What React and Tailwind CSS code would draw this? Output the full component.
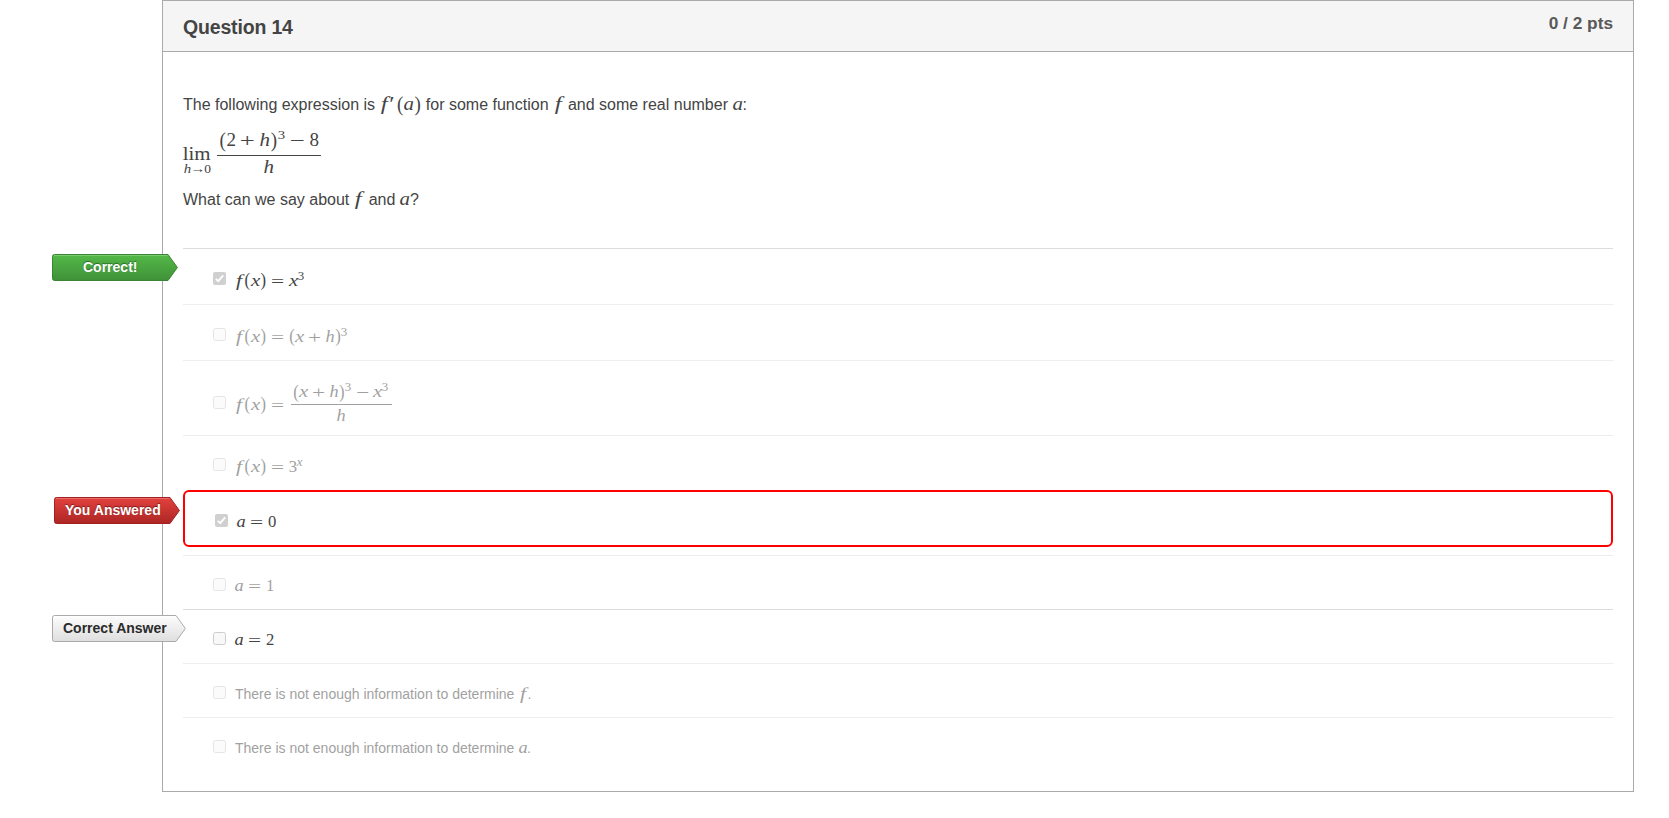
// single math glyph, width follows the glyph's advance
const G = ({ w = "w-[0.5em]", i, className = "", children }) => (
  <span className={`inline-block text-center whitespace-pre ${w} ${i ? "italic" : ""} ${className}`}>{children}</span>
);

const F = () => <G i w="w-[0.55em]"><span className="inline-block -translate-x-[0.02em] scale-x-130">f</span></G>;
const A = () => <G i w="w-[0.529em]"><span className="inline-block scale-x-110 scale-y-95 origin-[50%_80%]">a</span></G>;
const X = () => <G i w="w-[0.572em]"><span className="inline-block scale-x-125">x</span></G>;
const H = () => <G i w="w-[0.576em]"><span className="inline-block scale-x-110">h</span></G>;
const L = () => <G w="w-[0.389em]"><span className="inline-block scale-y-110">(</span></G>;
const R = () => <G w="w-[0.389em]"><span className="inline-block scale-y-110">)</span></G>;
const Op = ({ wide, children }) => (
  <G w="w-[0.778em]" className={wide ? "mx-[0.278em]" : "mx-[0.222em]"}>
    <span className="inline-block translate-y-[0.05em] scale-x-140">{children}</span>
  </G>
);
const Sup = ({ children }) => (
  <span className="relative -top-[0.52em] text-[0.707em] inline-block w-[0.64em]">
    <span className="inline-block scale-x-110">{children}</span>
  </span>
);

const M = ({ className = "text-[16.66px]", children }) => (
  <span className={`inline-block leading-none whitespace-nowrap font-['Liberation_Serif',serif] ${className}`}>{children}</span>
);

const Fx = () => (
  <>
    <F /><L /><X /><R />
    <Op wide>=</Op>
  </>
);

const Check = ({ checked, dim, className }) => (
  <svg width="13" height="13" viewBox="0 0 13 13" className={`block shrink-0 ${dim ? "opacity-50" : ""} ${className}`}>
    {checked ? (
      <>
        <rect width="13" height="13" rx="2" fill="#d0d0d0" />
        <path d="M2.8 6.8 5.2 9.2 10.2 3.4" fill="none" stroke="#fff" strokeWidth="1.9" />
      </>
    ) : (
      <rect x="0.5" y="0.5" width="12" height="12" rx="2" fill="#f8f8f8" stroke="#cdcdcd" />
    )}
  </svg>
);

const tags = {
  green: { from: "#54b948", to: "#3f9138", stroke: "#3a8433", light: "#7bcb72", text: "text-white [text-shadow:0_-1px_1px_#2b6a26]" },
  red: { from: "#e2423f", to: "#ad2624", stroke: "#a32220", light: "#ea6b68", text: "text-white [text-shadow:0_-1px_1px_#7d1a18]" },
  gray: { from: "#fdfdfd", to: "#dedede", stroke: "#aaaaaa", light: "#ffffff", text: "text-[#2b2b2b]" },
};

const Tag = ({ color, width, pos, textPos, children }) => {
  const t = tags[color];
  const b = width - 10;
  return (
    <div className={`absolute h-[27px] ${pos}`}>
      <svg width={width} height="27" className="block">
        <defs>
          <linearGradient id={color} x1="0" y1="0" x2="0" y2="1">
            <stop offset="0" stopColor={t.from} />
            <stop offset="1" stopColor={t.to} />
          </linearGradient>
        </defs>
        <path
          d={`M2.5 .5H${b}L${width - 0.6} 13.5L${b} 26.5H2.5Q.5 26.5 .5 24.5V2.5Q.5 .5 2.5 .5Z`}
          fill={`url(#${color})`}
          stroke={t.stroke}
        />
        <path d={`M2 1.5H${b - 0.5}`} stroke={t.light} />
      </svg>
      <span className={`absolute top-[4px] text-sm leading-[18px] font-bold whitespace-nowrap ${textPos} ${t.text}`}>{children}</span>
    </div>
  );
};

const Answer = ({ checked, dim, row, check = "mt-[22px]", label = "mt-[20px]", tag, children }) => (
  <div className={`relative flex items-start pl-[30px] ${row}`}>
    {tag}
    <Check checked={checked} dim={dim} className={check} />
    <div className={`ml-[9px] h-5 text-sm leading-5 whitespace-nowrap ${dim ? "opacity-50" : ""} ${label}`}>{children}</div>
  </div>
);

export default function App() {
  return (
    <div className="h-[818px] w-[1669px] overflow-hidden bg-white pl-[162px] font-['Liberation_Sans',Arial,sans-serif] text-[#444]">
      <div className="h-[792px] w-[1472px] border border-[#aaa]">
        <div className="flex h-[51px] justify-between border-b border-[#aaa] bg-[#f5f5f5] px-5">
          <h2 className="mt-[14px] text-[19.5px] leading-6 font-bold tracking-[-0.17px]">Question 14</h2>
          <div className="mt-[10px] text-[17.28px] leading-6 font-bold text-[#595959]">0 / 2 pts</div>
        </div>

        <div className="px-5">
          <div className="h-[196px] pt-[41px] text-base whitespace-nowrap">
            <p className="h-6 leading-6">
              The following expression is{" "}
              <M className="text-[19.04px]">
                <F />
                <G w="w-[0.34em]" className="relative -left-px"><span className="inline-block scale-x-130 scale-y-110">′</span></G>
                <L /><A /><R />
              </M>
              {" "}for some function <M className="text-[19.04px]"><F /></M> and some real number{" "}
              <M className="text-[19.04px]"><A /></M>:
            </p>
            <div className="flex h-[71px] font-['Liberation_Serif',serif] text-[19.04px] leading-none">
              <div className="mt-[28px] w-[28px] text-center">
                <div className="h-[17px] leading-[17px]"><span className="inline-block scale-x-110">lim</span></div>
                <div className="flex justify-center text-[13.5px] leading-[13px]">
                  <H /><G w="w-[1em]"><span className="inline-block scale-x-110">→</span></G><G>0</G>
                </div>
              </div>
              <div className="mt-[13px] ml-[6px] flex w-[104px] flex-col items-center">
                <div className="h-[25px] leading-[20px]">
                  <L /><G>2</G><Op>+</Op><H /><R /><Sup>3</Sup><Op>−</Op><G>8</G>
                </div>
                <div className="h-px w-full shrink-0 bg-[#444]" />
                <div className="mt-px leading-[20px]"><H /></div>
              </div>
            </div>
            <p className="h-6 leading-6">
              What can we say about <M className="text-[19.04px]"><F /></M> and <M className="text-[19.04px]"><A /></M>?
            </p>
          </div>

          <Answer
            checked
            row="h-14 border-t border-[#ddd]"
            check="mt-[23px]"
            label="mt-[22px]"
            tag={<Tag color="green" width={126} pos="top-[5px] -left-[131px]" textPos="left-[31px]">Correct!</Tag>}
          >
            <M><Fx /><X /><Sup>3</Sup></M>
          </Answer>
          <Answer dim row="h-14 border-t border-[#eee]" check="mt-[23px]" label="mt-[22px]">
            <M><Fx /><L /><X /><Op>+</Op><H /><R /><Sup>3</Sup></M>
          </Answer>
          <Answer dim row="h-[75px] border-t border-[#eee]" check="mt-[35px]" label="mt-[36px] flex">
            <M className="text-[16.66px] leading-5"><Fx /></M>
            <div className="-mt-[15px] ml-[2px] flex w-[101px] flex-col items-center font-['Liberation_Serif',serif] text-[16.66px]">
              <div className="h-[22px] leading-5">
                <L /><X /><Op>+</Op><H /><R /><Sup>3</Sup><Op>−</Op><X /><Sup>3</Sup>
              </div>
              <div className="h-px w-full shrink-0 bg-[#444]" />
              <div className="mt-px leading-5"><H /></div>
            </div>
          </Answer>
          <Answer dim row="h-[55px] border-t border-[#eee]" label="mt-[21px]">
            <M><Fx /><G>3</G><Sup><i>x</i></Sup></M>
          </Answer>
          <Answer
            checked
            row="mb-2 h-[57px] rounded-md border-2 border-[red]"
            check="mt-[22px]"
            label="mt-[20px]"
            tag={<Tag color="red" width={126} pos="top-[5px] -left-[131px]" textPos="left-[11px]">You Answered</Tag>}
          >
            <M><A /><Op wide>=</Op><G>0</G></M>
          </Answer>
          <Answer dim row="h-[54px] border-t border-[#eee]">
            <M><A /><Op wide>=</Op><G>1</G></M>
          </Answer>
          <Answer
            row="h-[54px] border-t border-[#ddd]"
            tag={<Tag color="gray" width={134} pos="top-[5px] -left-[131px]" textPos="left-[11px]">Correct Answer</Tag>}
          >
            <M><A /><Op wide>=</Op><G>2</G></M>
          </Answer>
          <Answer dim row="h-[54px] border-t border-[#eee]">
            There is not enough information to determine <M><F /></M>.
          </Answer>
          <Answer dim row="h-[54px] border-t border-[#eee]">
            There is not enough information to determine <M><A /></M>.
          </Answer>
        </div>
      </div>
    </div>
  );
}
